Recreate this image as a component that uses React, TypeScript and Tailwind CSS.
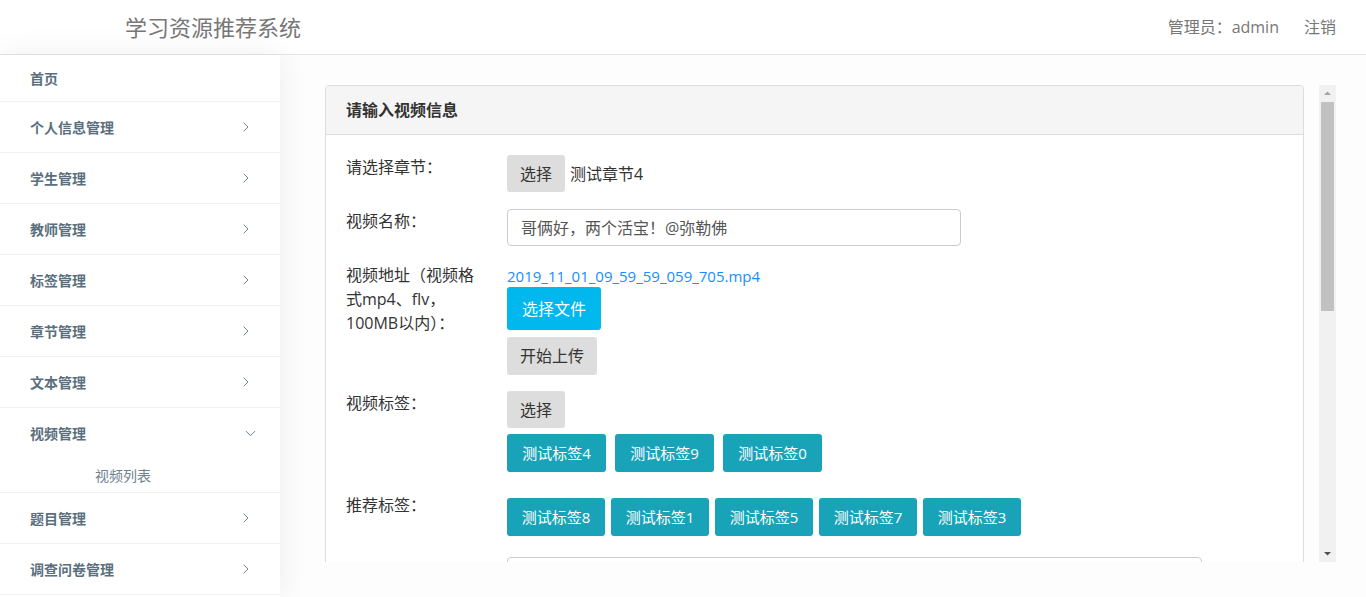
import { ChevronRight, ChevronDown } from 'lucide-react'

const menu = [
  { name: '个人信息管理' },
  { name: '学生管理' },
  { name: '教师管理' },
  { name: '标签管理' },
  { name: '章节管理' },
  { name: '文本管理' },
]

const videoTags = ['测试标签4', '测试标签9', '测试标签0']
const recTags = ['测试标签8', '测试标签1', '测试标签5', '测试标签7', '测试标签3']

function MenuItem({ name }: { name: string }) {
  return (
    <div className="h-[51px] flex items-center justify-between pl-[30px] pr-[26px] border-b border-[#f2f2f2]">
      <span className="text-[14px] font-bold text-[#5a6f7d]">{name}</span>
      <ChevronRight size={16} strokeWidth={1.3} className="text-[#5a6f7d]" />
    </div>
  )
}

function Row({ label, children, className = '' }: { label: string; children: React.ReactNode; className?: string }) {
  return (
    <div className={'flex ' + className}>
      <div className="w-[161px] shrink-0 pr-[28px] text-[16px] leading-[24px] text-[#333]">{label}</div>
      <div className="flex-1">{children}</div>
    </div>
  )
}

export default function App() {
  return (
    <div className="h-[597px] w-[1366px] overflow-hidden bg-[#fdfdfd] flex flex-col" style={{ fontFamily: '"Open Sans", "Noto Sans CJK SC", sans-serif' }}>
      <header className="h-[55px] shrink-0 bg-white border-b border-[#e5e5e5] flex items-center justify-between pl-[125px] pr-[30px]">
        <h1 className="text-[22px] text-[#777]">学习资源推荐系统</h1>
        <div className="flex items-center gap-[25px] text-[16px] text-[#777]">
          <span>管理员：admin</span>
          <span>注销</span>
        </div>
      </header>

      <div className="flex flex-1 min-h-0">
        <aside className="w-[280px] shrink-0 bg-white shadow-[0_0_30px_rgba(0,0,0,0.07)] z-10">
          <div className="h-[47px] flex items-center pl-[30px] border-b border-[#f2f2f2]">
            <span className="text-[14px] font-bold text-[#5a6f7d]">首页</span>
          </div>
          {menu.map((m) => (
            <MenuItem key={m.name} name={m.name} />
          ))}
          <div className="border-b border-[#f2f2f2]">
            <div className="h-[50px] flex items-center justify-between pl-[30px] pr-[21px]">
              <span className="text-[14px] font-bold text-[#5a6f7d]">视频管理</span>
              <ChevronDown size={17} strokeWidth={1.2} className="text-[#5a6f7d]" />
            </div>
            <div className="h-[34px] flex items-center pl-[95px] text-[14px] text-[#6f818d]">视频列表</div>
          </div>
          <MenuItem name="题目管理" />
          <MenuItem name="调查问卷管理" />
        </aside>

        <main className="flex-1 pl-[45px] pt-[30px] pr-[30px]">
          <div className="h-[477px] flex">
            <div className="flex-1 overflow-hidden pr-[15px]">
              <div className="bg-white border border-[#ddd] rounded-[4px]">
                <div className="h-[49px] bg-[#f5f5f5] border-b border-[#ddd] rounded-t-[4px] flex items-center px-[20px] text-[16px] font-bold text-[#333]">
                  请输入视频信息
                </div>
                <div className="px-[20px] pt-[20px] pb-[30px]">
                  <Row label="请选择章节：" className="mb-[17px]">
                    <div className="flex items-center">
                      <button className="h-[37px] w-[58px] bg-[#ddd] rounded-[3px] text-[16px] text-[#333]">选择</button>
                      <span className="ml-[5px] text-[16px] text-[#333]">测试章节4</span>
                    </div>
                  </Row>
                  <Row label="视频名称：" className="mb-[17px]">
                    <div className="w-[454px] h-[37px] border border-[#ccc] rounded-[4px] flex items-center px-[13px] text-[16px] text-[#555]">
                      哥俩好，两个活宝！@弥勒佛
                    </div>
                  </Row>
                  <Row label="视频地址（视频格式mp4、flv，100MB以内）：" className="mb-[16px]">
                    <div className="pt-[3px] flex flex-col items-start">
                      <a className="text-[15px] leading-[20px] text-[#1a8cff]">2019_11_01_09_59_59_059_705.mp4</a>
                      <button className="mt-[1px] h-[43px] w-[94px] bg-[#00b7ee] rounded-[3px] text-[16px] text-white">选择文件</button>
                      <button className="mt-[7px] h-[38px] w-[90px] bg-[#ddd] rounded-[3px] text-[16px] text-[#333]">开始上传</button>
                    </div>
                  </Row>
                  <Row label="视频标签：" className="mb-[21px]">
                    <div className="flex flex-col items-start">
                      <button className="h-[37px] w-[58px] bg-[#ddd] rounded-[3px] text-[16px] text-[#333]">选择</button>
                      <div className="mt-[6px] flex gap-[9px]">
                        {videoTags.map((t) => (
                          <button key={t} className="h-[38px] w-[99px] bg-[#19a3b8] rounded-[3px] text-[15px] text-white">{t}</button>
                        ))}
                      </div>
                    </div>
                  </Row>
                  <Row label="推荐标签：" className="mb-[21px]">
                    <div className="mt-[5px] flex gap-[6px]">
                      {recTags.map((t) => (
                        <button key={t} className="h-[38px] w-[98px] bg-[#19a3b8] rounded-[3px] text-[15px] text-white">{t}</button>
                      ))}
                    </div>
                  </Row>
                  <Row label="">
                    <div className="w-[695px] h-[120px] border border-[#ccc] rounded-[4px]" />
                  </Row>
                </div>
              </div>
            </div>
            <div className="w-[17px] bg-[#f1f1f1] flex flex-col items-center">
              <svg width="17" height="17" viewBox="0 0 17 17"><path d="M5 10 L8.5 6.5 L12 10 Z" fill="#a3a3a3" /></svg>
              <div className="w-[13px] h-[209px] bg-[#c1c1c1]" />
              <div className="flex-1" />
              <svg width="17" height="17" viewBox="0 0 17 17"><path d="M5 7 L8.5 10.5 L12 7 Z" fill="#505050" /></svg>
            </div>
          </div>
        </main>
      </div>
    </div>
  )
}
